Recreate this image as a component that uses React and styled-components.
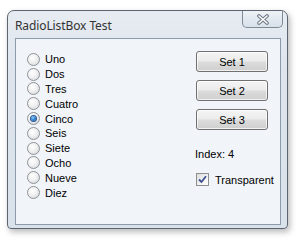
import React, { useState } from 'react'
import styled, { createGlobalStyle } from 'styled-components'

const GlobalStyle = createGlobalStyle`
  html, body {
    margin: 0;
    padding: 0;
    background: #ffffff;
  }
  body {
    font-family: "Liberation Sans", Arial, sans-serif;
  }
`

const items = ['Uno', 'Dos', 'Tres', 'Cuatro', 'Cinco', 'Seis', 'Siete', 'Ocho', 'Nueve', 'Diez']

const Page = styled.div`
  width: 300px;
  height: 241px;
  padding: 10px 0 0 7px;
  box-sizing: border-box;
`

const Window = styled.div`
  width: 281px;
  height: 219px;
  box-sizing: border-box;
  border: 1px solid #5d6670;
  border-radius: 7px 7px 4px 4px;
  background: linear-gradient(180deg, #e7ecf2 0%, #dde4ec 30%, #d9e1ea 100%);
  box-shadow: 2px 3px 6px rgba(0, 0, 0, 0.28);
  display: flex;
  flex-direction: column;
`

const TitleBar = styled.div`
  height: 27px;
  display: flex;
  align-items: flex-start;
  padding-left: 7px;
  padding-right: 4px;
`

const Title = styled.div`
  flex: 1;
  padding-top: 6px;
  font-family: "Noto Sans", "Open Sans", sans-serif;
  font-size: 12px;
  color: #333;
  letter-spacing: -0.1px;
`

const CloseButton = styled.div`
  width: 41px;
  height: 17px;
  box-sizing: border-box;
  border: 1px solid #7f8a97;
  border-top: none;
  border-radius: 0 0 5px 5px;
  background: linear-gradient(180deg, #eef2f6 0%, #e3e9f0 50%, #d8e0ea 100%);
  display: flex;
  align-items: center;
  justify-content: center;
`

const Client = styled.div`
  flex: 1;
  margin: 0 6px 3px 7px;
  border: 1px solid #8d9aa9;
  background: #f1f5fa;
  display: flex;
  padding: 13px 0 0 11px;
`

const RadioList = styled.div`
  width: 150px;
  display: flex;
  flex-direction: column;
`

const RadioRow = styled.label`
  height: 14.8px;
  display: flex;
  align-items: center;
  gap: 5px;
  font-size: 11px;
  color: #000;
  cursor: default;
`

const RadioCircle = styled.span`
  width: 13px;
  height: 13px;
  box-sizing: border-box;
  border-radius: 50%;
  border: 1px solid #8e9399;
  background: radial-gradient(circle at 40% 35%, #ffffff 0%, #f0f0f0 45%, #cfd2d6 100%);
  display: flex;
  align-items: center;
  justify-content: center;
  flex-shrink: 0;
`

const RadioDot = styled.span`
  width: 5px;
  height: 5px;
  border-radius: 50%;
  background: radial-gradient(circle at 40% 35%, #8fd0ff 0%, #2f7fd0 50%, #17407a 100%);
  box-shadow: 0 0 0 1px #285b97;
`

const Side = styled.div`
  margin-left: 19px;
  display: flex;
  flex-direction: column;
`

const ButtonStack = styled.div`
  display: flex;
  flex-direction: column;
  gap: 8px;
  margin-top: -1px;
`

const Button = styled.button`
  width: 72px;
  height: 21px;
  box-sizing: border-box;
  border: 1px solid #707070;
  border-radius: 3px;
  background: linear-gradient(180deg, #f4f4f4 0%, #ebebeb 48%, #dcdcdc 52%, #cfcfcf 100%);
  box-shadow: inset 0 0 0 1px rgba(255, 255, 255, 0.7);
  font-family: "Liberation Sans", Arial, sans-serif;
  font-size: 11px;
  color: #000;
  padding: 0;
`

const IndexLabel = styled.div`
  font-size: 11px;
  color: #000;
  margin-top: 18px;
  margin-left: -1px;
`

const CheckRow = styled.label`
  display: flex;
  align-items: center;
  gap: 6px;
  margin-top: 13px;
  font-size: 11px;
  color: #000;
`

const CheckBox = styled.span`
  width: 13px;
  height: 13px;
  box-sizing: border-box;
  border: 1px solid #8e8f8f;
  background: linear-gradient(135deg, #dcdcdc 0%, #f4f4f4 60%, #ffffff 100%);
  display: flex;
  align-items: center;
  justify-content: center;
`

const CloseGlyph = () => (
  <svg width="14" height="11" viewBox="0 0 14 11">
    <path d="M3 2 L11 9 M11 2 L3 9" stroke="#6c7683" strokeWidth="3.6" strokeLinecap="round" />
    <path d="M3 2 L11 9 M11 2 L3 9" stroke="#ffffff" strokeWidth="1.6" strokeLinecap="round" />
  </svg>
)

const CheckGlyph = () => (
  <svg width="9" height="9" viewBox="0 0 9 9">
    <path d="M1 4.5 L3.5 7 L8 1.2" fill="none" stroke="#3d5190" strokeWidth="1.8" />
  </svg>
)

export default function App() {
  const [selected, setSelected] = useState(4)

  return (
    <>
      <GlobalStyle />
      <Page>
        <Window>
          <TitleBar>
            <Title>RadioListBox Test</Title>
            <CloseButton>
              <CloseGlyph />
            </CloseButton>
          </TitleBar>
          <Client>
            <RadioList>
              {items.map((name, i) => (
                <RadioRow key={name} onClick={() => setSelected(i)}>
                  <RadioCircle>{selected === i && <RadioDot />}</RadioCircle>
                  {name}
                </RadioRow>
              ))}
            </RadioList>
            <Side>
              <ButtonStack>
                <Button onClick={() => setSelected(1)}>Set 1</Button>
                <Button onClick={() => setSelected(2)}>Set 2</Button>
                <Button onClick={() => setSelected(3)}>Set 3</Button>
              </ButtonStack>
              <IndexLabel>Index: {selected}</IndexLabel>
              <CheckRow>
                <CheckBox>
                  <CheckGlyph />
                </CheckBox>
                Transparent
              </CheckRow>
            </Side>
          </Client>
        </Window>
      </Page>
    </>
  )
}
